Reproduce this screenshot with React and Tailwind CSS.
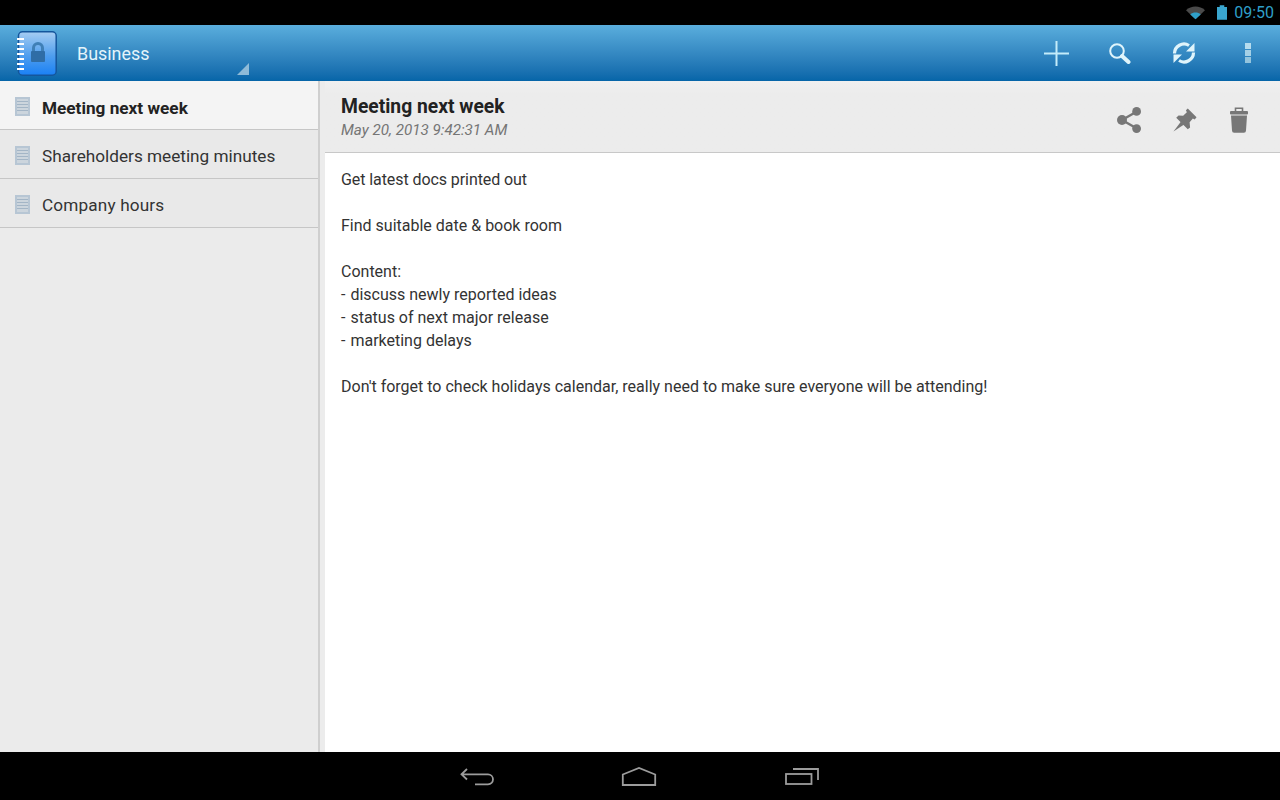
const notes = [
  { title: "Meeting next week", active: true },
  { title: "Shareholders meeting minutes" },
  { title: "Company hours", spacing: "tracking-[0.15px]" },
];

const NoteIcon = () => (
  <svg width="15" height="19" viewBox="0 0 15 19" className="shrink-0">
    <rect x="0" y="0" width="15" height="19" fill="#b7c6d4" />
    <rect x="2" y="2" width="11" height="15" fill="#ccd5dd" />
    {[4, 7, 10, 13].map((y) => (
      <rect key={y} x="2" y={y} width="11" height="1" fill="#a3b5c6" />
    ))}
  </svg>
);

const Logo = () => (
  <svg width="40" height="45" viewBox="0 0 40 45">
    <defs>
      <linearGradient id="book" x1="0" y1="0" x2="0" y2="1">
        <stop offset="0" stopColor="#a6cdf2" />
        <stop offset="0.55" stopColor="#4f9eee" />
        <stop offset="1" stopColor="#1a80f5" />
      </linearGradient>
    </defs>
    <rect x="1.5" y="0.8" width="37.7" height="43.4" rx="4" fill="url(#book)" stroke="#14569c" strokeWidth="1.5" />
    <path d="M16.5 21v-4a4.5 4.5 0 0 1 9 0v4" fill="none" stroke="#3f7fb6" strokeWidth="3" />
    <rect x="14" y="20" width="14" height="11" rx="1" fill="#2f6da6" />
    {[7, 12, 17, 22, 27, 32, 37].map((y) => (
      <rect key={y} x="0" y={y} width="7" height="2" fill="#ffffff" />
    ))}
  </svg>
);

const Plus = () => (
  <svg width="25" height="25" viewBox="0 0 25 25">
    <path d="M12.5 0v25M0 12.5h25" stroke="#c4ecfa" strokeWidth="2" />
  </svg>
);

const SearchIcon = () => (
  <svg width="22" height="21" viewBox="0 0 22 21" fill="none" stroke="#dff4fb">
    <circle cx="8" cy="8" r="6.8" strokeWidth="2" />
    <path d="M13 13l6.5 6" strokeWidth="4" strokeLinecap="round" />
  </svg>
);

const Refresh = () => (
  <svg width="24" height="24" viewBox="0 0 24 24">
    <path d="M2.5 12.5A9.5 9.5 0 0 1 17 4.5" fill="none" stroke="#dff4fb" strokeWidth="3.2" />
    <path d="M21.5 11.5A9.5 9.5 0 0 1 7 19.5" fill="none" stroke="#dff4fb" strokeWidth="3.2" />
    <path d="M22.5 2v8.5H14z" fill="#dff4fb" />
    <path d="M1.5 22v-8.5H10z" fill="#dff4fb" />
  </svg>
);

const Share = () => (
  <svg width="24" height="26" viewBox="0 0 24 26" fill="#777">
    <path d="M19 5 5 13l14 8" fill="none" stroke="#777" strokeWidth="2.4" />
    <circle cx="19.6" cy="4.4" r="4.4" />
    <circle cx="5" cy="13" r="5" />
    <circle cx="19.6" cy="21.6" r="4.4" />
  </svg>
);

const Pin = () => (
  <svg width="24" height="24" viewBox="0 0 26 26" fill="#777">
    <path d="M16 0.5 25.500 10l-2 2.500-2-1-3.500 4 .5 5.500-2.500 2L3.500 10.500 6 8l5 .5 4-4-1-2z" />
    <path d="M8.500 15 0.5 25.500 12 18z" />
  </svg>
);

const Trash = () => (
  <svg width="18" height="26" viewBox="0 0 18 26" fill="#777">
    <path d="M5.5 4V1.2h7V4" fill="none" stroke="#777" strokeWidth="1.6" />
    <rect x="0" y="4" width="18" height="3.4" rx="1" />
    <path d="M1 8.6h16l-1 15a2.2 2.2 0 0 1-2.2 2.2H4.2A2.2 2.2 0 0 1 2 23.6z" />
  </svg>
);

const Dash = () => <span className="mr-[1px]">{"- "}</span>;

export default function App() {
  return (
    <div className="h-[800px] w-[1280px] flex flex-col overflow-hidden font-['Roboto',sans-serif] text-[#333]">
      {/* Status bar */}
      <div className="h-[25px] bg-black flex items-center justify-end pr-[6px] shrink-0">
        <svg width="19" height="15" viewBox="0 0 20 14" className="mr-[12px]">
          <path d="M0 4.5C5.5-.5 14.5-.5 20 4.5L10 14z" fill="#4a4a4a" />
          <path d="M4.5 9c3-2.700 8-2.700 11 0L10 14z" fill="#2f9fc8" />
        </svg>
        <svg width="10" height="15" viewBox="0 0 11 16" className="mr-[7px]">
          <path d="M3 0h5v2h3v14H0V2h3z" fill="#3aa6cf" />
        </svg>
        <span className="text-[16px] leading-none text-[#2f9fc8]">09:50</span>
      </div>

      {/* Action bar */}
      <div className="h-[56px] shrink-0 flex items-center bg-gradient-to-b from-[#5aaedd] to-[#0565a8]">
        <div className="ml-[17px] w-[40px] flex">
          <Logo />
        </div>
        <div className="relative w-[172px] h-full ml-[20px] flex items-center">
          <span className="text-[17.9px] text-[#e4f4fb] mt-[2px]">Business</span>
          <span className="absolute right-0 bottom-[6px] w-0 h-0 border-l-[12px] border-l-transparent border-b-[12px] border-b-[#8fbbd8]" />
        </div>
        <div className="ml-auto flex items-center pr-[29px]">
          <Plus />
          <div className="ml-[40px] flex">
            <SearchIcon />
          </div>
          <div className="ml-[41px] flex">
            <Refresh />
          </div>
          <div className="ml-[49px] flex flex-col gap-[1px]">
            <span className="w-[6px] h-[6px] bg-[#b6dcee]" />
            <span className="w-[6px] h-[6px] bg-[#a5d0e6]" />
            <span className="w-[6px] h-[6px] bg-[#94c4dd]" />
          </div>
        </div>
      </div>

      <div className="flex-1 flex min-h-0">
        {/* Note list */}
        <div className="w-[318px] shrink-0 bg-[#ebebeb]">
          {notes.map((note) => (
            <div
              key={note.title}
              className={`h-[49px] flex items-center pl-[15px] border-b border-[#c6c6c6] ${note.active ? "bg-[#f4f4f4] font-bold text-[#222]" : "bg-[#e9e9e9]"}`}
            >
              <div className="mt-[3px]">
                <NoteIcon />
              </div>
              <span className={`ml-[12px] text-[17.2px] ${note.spacing || ""} ${note.active ? "mt-[8px]" : "mt-[6px]"}`}>{note.title}</span>
            </div>
          ))}
        </div>
        <div className="w-[2px] shrink-0 bg-[#cfcfcf]" />

        {/* Note detail */}
        <div className="flex-1 flex flex-col bg-[#ececec] min-w-0">
          <div className="h-[72px] shrink-0 flex items-center ml-[5px] pl-[16px] border-b border-[#c8c8c8] bg-gradient-to-b from-[#f0f0f0] to-[#ececec] to-[18%]">
            <div className="mt-[1px]">
              <div className="text-[19.3px] leading-[26px] font-bold text-[#222]">Meeting next week</div>
              <div className="text-[15.2px] leading-[20px] italic text-[#757575]">May 20, 2013 9:42:31 AM</div>
            </div>
            <div className="ml-auto flex items-center pr-[32px] mt-[7px]">
              <Share />
              <div className="ml-[32px] flex"><Pin /></div>
              <div className="ml-[33px] flex"><Trash /></div>
            </div>
          </div>
          <div className="flex-1 ml-[5px] bg-white pl-[16px] pt-[15px] text-[16px] leading-[23px]">
            <p className="tracking-[-0.08px]">Get latest docs printed out</p>
            <p className="mt-[23px]">Find suitable date &amp; book room</p>
            <p className="mt-[23px]">Content:</p>
            <p><Dash />discuss newly reported ideas</p>
            <p><Dash />status of next major release</p>
            <p><Dash />marketing delays</p>
            <p className="mt-[23px]">Don't forget to check holidays calendar, really need to make sure everyone will be attending!</p>
          </div>
        </div>
      </div>

      {/* Navigation bar */}
      <div className="h-[48px] shrink-0 bg-black flex items-center pl-[460px] pt-[2px]">
        <svg width="34" height="18" viewBox="0 0 34 18" fill="none" stroke="#9c9c9c" strokeWidth="1.8">
          <path d="M7 1 1.500 6.300 7 11.500M2 6.300h26a5 5 0 0 1 0 10H15" />
        </svg>
        <svg width="36" height="19" viewBox="0 0 36 19" fill="none" stroke="#9c9c9c" strokeWidth="1.8" className="ml-[127px] -mt-[2px]">
          <path d="M1.800 7.500 18 1l16.200 6.500V18H1.800z" />
        </svg>
        <svg width="34" height="17" viewBox="0 0 34 17" fill="none" stroke="#9c9c9c" strokeWidth="1.8" className="ml-[128px] -mt-[1px]">
          <path d="M8 1h25v11" />
          <rect x="1" y="6" width="25.500" height="10" />
        </svg>
      </div>
    </div>
  );
}
